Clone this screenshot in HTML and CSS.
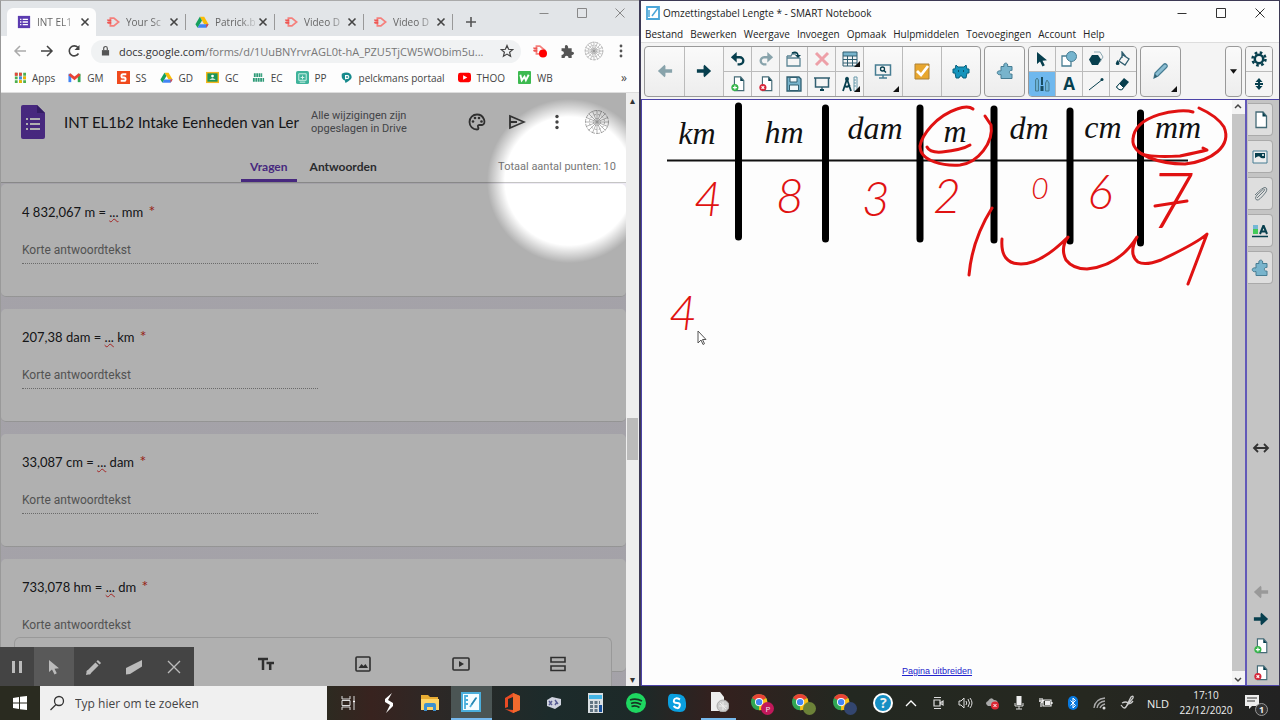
FILE: index.html
```html
<!DOCTYPE html>
<html lang="nl">
<head>
<meta charset="utf-8">
<title>Omzettingstabel Lengte</title>
<link rel="stylesheet" href="styles.css">
</head>
<body>
<svg class="defs" aria-hidden="true">
  <symbol id="x" viewBox="0 0 12 12"><path d="M2.5 2.5l7 7m0-7l-7 7" fill="none" stroke="currentColor" stroke-width="1.6"/></symbol>
  <symbol id="xthin" viewBox="0 0 12 12"><path d="M1.5 1.5l9 9m0-9l-9 9" fill="none" stroke="currentColor"/></symbol>
  <symbol id="min" viewBox="0 0 12 12"><path d="M1.500 6.500h9" stroke="currentColor"/></symbol>
  <symbol id="max" viewBox="0 0 12 12"><path d="M1.500 1.500h9v9h-9z" fill="none" stroke="currentColor"/></symbol>
  <symbol id="forms" viewBox="0 0 16 16"><path d="M1 1h14v14H1z" fill="#5b3bb0"/><path d="M3.500 5h1.500m1.500 0h6M3.500 8h1.500m1.500 0h6M3.500 11h1.500m1.500 0h6" stroke="#fff" stroke-width="1.500"/></symbol>
  <symbol id="rec" viewBox="0 0 16 14"><path d="M5 2.500h4l5.500 4.500L9 11.500H5z" fill="none" stroke="#f5807c" stroke-width="2"/><path d="M1 4h5v2.500H2zm1 5h4V7H1z" fill="#ee5753"/></symbol>
  <symbol id="drive" viewBox="0 0 16 14"><path d="M5.500 1h5l5 8.500h-5z" fill="#fbbc05"/><path d="M5.500 1L8 5.200 3 13.500.5 9.500z" fill="#16a05d"/><path d="M5.300 9.500h10.200L13 13.500H3z" fill="#4285f4"/><path d="M12.800 9.500h2.700L13 13.500z" fill="#ea4335"/></symbol>
  <symbol id="wheel" viewBox="0 0 26 26"><g fill="none" stroke="#959595" stroke-width=".8"><circle cx="13" cy="13" r="11.500" stroke-dasharray="4 1"/><circle cx="13" cy="13" r="7.500" stroke-dasharray="2 2"/><circle cx="13" cy="13" r="3.500" stroke-dasharray="2 1"/><path stroke-width=".7" d="M13 1v24M1 13h24M4.500 4.500l17 17m0-17l-17 17M8.400 2l9.200 22M17.600 2L8.400 24M2 8.400l22 9.200M2 17.600L24 8.400"/></g></symbol>
  <symbol id="arrow" viewBox="0 0 18 14"><path d="M9.500 0L17 7l-7.500 7-1-1.300V9H1V5h7.500V1.300z" fill="currentColor"/></symbol>
  <symbol id="puzzle" viewBox="0 0 18 18"><path d="M5 4.500h3C6.500 0 13 0 11.500 4.500H16v4c-3.500-1-3.500 4.500 0 3.500v4.500H5v-4C0 14 0 7.500 5 9z" fill="currentColor" stroke="#477d93" stroke-width="1"/></symbol>
  <symbol id="page" viewBox="0 0 16 18"><path d="M4 1h7l3.500 4v11.500H4z" fill="#fff" stroke="#456b77" stroke-width="1.300"/><path d="M10.500 1v4.500h4z" fill="#073f4e"/></symbol>
  <symbol id="addpage" viewBox="0 0 16 18"><use href="#page" width="16" height="18"/><circle cx="4.500" cy="13" r="4" fill="#36b54a"/><path d="M2.200 13h4.600M4.500 10.700v4.600" stroke="#fff" stroke-width="1.300"/></symbol>
  <symbol id="delpage" viewBox="0 0 16 18"><use href="#page" width="16" height="18"/><circle cx="4.500" cy="13" r="4" fill="#d6273a"/><path d="M3 11.500l3 3m0-3l-3 3" stroke="#fff" stroke-width="1.300"/></symbol>
  <symbol id="pointer" viewBox="0 0 14 16"><path d="M2 1v12l3-2.500 2.500 5 2.300-1.200-2.300-4.600 4.500-.5z" fill="currentColor"/></symbol>
  <symbol id="undo" viewBox="0 0 18 16"><path d="M6 6h5a4 4 0 010 8H8.500" fill="none" stroke="currentColor" stroke-width="2.600"/><path d="M7.500 0v12L1 6z" fill="currentColor"/></symbol>
  <symbol id="chrome" viewBox="0 0 22 20"><circle cx="10" cy="9" r="9" fill="#31a653"/><path d="M10 9L2.200 4.500A9 9 0 0117.800 4.500z" fill="#e94335"/><path d="M10 9l7.800-4.500A9 9 0 0110 18z" fill="#fbc116"/><circle cx="10" cy="9" r="4.500" fill="#fff"/><circle cx="10" cy="9" r="3.500" fill="#4285f4"/></symbol>
</svg>

<main class="desk">
  <section class="browser" aria-label="Browser">
    <div class="tabs">
      <div class="tab current"><svg class="i14"><use href="#forms"/></svg><span>INT EL1</span><button aria-label="Sluiten"><svg class="i12"><use href="#x"/></svg></button></div>
      <div class="tab plain"><svg class="i14"><use href="#rec"/></svg><span>Your Sc</span><button aria-label="Sluiten"><svg class="i12"><use href="#x"/></svg></button></div>
      <div class="tab"><svg class="i14"><use href="#drive"/></svg><span>Patrick.b</span><button aria-label="Sluiten"><svg class="i12"><use href="#x"/></svg></button></div>
      <div class="tab"><svg class="i14"><use href="#rec"/></svg><span>Video D</span><button aria-label="Sluiten"><svg class="i12"><use href="#x"/></svg></button></div>
      <div class="tab"><svg class="i14"><use href="#rec"/></svg><span>Video D</span><button aria-label="Sluiten"><svg class="i12"><use href="#x"/></svg></button></div>
      <button class="newtab" aria-label="Nieuw tabblad"><svg class="i12" viewBox="0 0 12 12"><path d="M6 1v10M1 6h10" stroke="#555" stroke-width="1.600"/></svg></button>
      <div class="winctl"><button aria-label="Minimaliseren"><svg class="i12"><use href="#min"/></svg></button><button aria-label="Maximaliseren"><svg class="i12"><use href="#max"/></svg></button><button aria-label="Sluiten"><svg class="i12"><use href="#xthin"/></svg></button></div>
    </div>
    <div class="nav">
      <button class="faint" aria-label="Terug"><svg class="i14" viewBox="0 0 14 14"><path d="M13 7H2m5-5L2 7l5 5" fill="none" stroke="currentColor" stroke-width="1.500"/></svg></button>
      <button aria-label="Vooruit"><svg class="i14" viewBox="0 0 14 14"><path d="M1 7h11M7 2l5 5-5 5" fill="none" stroke="currentColor" stroke-width="1.500"/></svg></button>
      <button aria-label="Vernieuwen"><svg class="i14" viewBox="0 0 14 14"><path d="M11.500 9.500a5 5 0 11-.5-6" fill="none" stroke="currentColor" stroke-width="1.600"/><path d="M12.500 1v5h-5z" fill="currentColor"/></svg></button>
      <div class="address"><svg class="lock" viewBox="0 0 10 12"><path d="M1 5h8v6H1z" fill="#555"/><path d="M3 5V3a2 2 0 014 0v2" fill="none" stroke="#555" stroke-width="1.300"/></svg><span><b>docs.google.com</b>/forms/d/1UuBNYrvrAGL0t-hA_PZU5TjCW5WObim5u...</span><svg class="i14" viewBox="0 0 14 14"><path d="M7 1.500l1.600 3.800 4.100.3-3.100 2.700 1 4L7 10.100l-3.600 2.200 1-4L1.300 5.600l4.100-.3z" fill="none" stroke="#444" stroke-width="1.200"/></svg></div>
      <button aria-label="Opname"><svg class="i16" viewBox="0 0 16 14"><use href="#rec" width="14" height="12"/><circle cx="11" cy="9.500" r="4" fill="#f00"/></svg></button>
      <button aria-label="Extensies"><svg class="i14" viewBox="0 0 18 18"><path d="M2 5.500h4.500C5 0 11 0 10.500 5.500H15V10c4-.5 4 4.500 0 4v4h-4c0-4-5-4-5 0H2v-4c4 0 4-5 0-5z" fill="#555"/></svg></button>
      <button aria-label="Profiel"><svg class="i20"><use href="#wheel"/></svg></button>
      <button aria-label="Menu"><svg class="i14" viewBox="0 0 14 14" fill="#555"><circle cx="7" cy="2" r="1.400"/><circle cx="7" cy="7" r="1.400"/><circle cx="7" cy="12" r="1.400"/></svg></button>
    </div>
    <nav class="bookmarks">
      <a href="#"><svg viewBox="0 0 14 14"><path d="M2 3.500h12M2 7.500h12M2 11.500h12" stroke-width="3" stroke-dasharray="3 1.500" stroke="#4caf50"/><path d="M2 3.500h8" stroke="#e8453c" stroke-width="3" stroke-dasharray="3 1.500"/><path d="M6.500 7.500h3" stroke="#4285f4" stroke-width="3"/><path d="M11 7.500h3M6.500 11.500h3" stroke="#f4b400" stroke-width="3"/></svg>Apps</a>
      <a href="#"><svg viewBox="0 0 14 14"><path d="M2 12V3" stroke="#4285f4" stroke-width="3"/><path d="M12 12V3" stroke="#34a853" stroke-width="3"/><path d="M1.500 3.500L7 8l5.500-4.500" fill="none" stroke="#ea4335" stroke-width="3"/></svg>GM</a>
      <a href="#"><svg viewBox="0 0 14 14"><path d="M0 0h14v14H0z" fill="#f04a1d"/><path d="M10 3.500H6.500a1.700 1.700 0 000 3.500h1a1.700 1.700 0 010 3.500H4" fill="none" stroke="#fff" stroke-width="2"/></svg>SS</a>
      <a href="#"><svg><use href="#drive"/></svg>GD</a>
      <a href="#"><svg viewBox="0 0 14 14"><path d="M0 1h14v12H0z" fill="#f4b81f"/><path d="M1.500 2.500h11v9h-11z" fill="#1c9656"/><circle cx="7" cy="5.500" r="1.500" fill="#fff"/><path d="M3.500 9.500q3.500-3.500 7 0z" fill="#fff"/></svg>GC</a>
      <a href="#"><svg viewBox="0 0 14 14"><path d="M2 4.500h9M1 9.500h12" stroke="#2f9b78" stroke-width="4" stroke-dasharray="2 .6"/></svg>EC</a>
      <a href="#"><svg viewBox="0 0 14 14"><rect width="14" height="14" rx="2" fill="#3fb39b"/><path d="M3 3h8v7H3zM5 7h4M7 5v4M4 12h6" fill="none" stroke="#d6f5ec"/></svg>PP</a>
      <a href="#"><svg viewBox="0 0 14 14"><path d="M2 3q5-3 9 0 4 5-2 8l-3 2-1-3Q1 9 2 3z" fill="#168a8c"/><path d="M6 9V5h2a1.500 1.500 0 010 3H6" fill="none" stroke="#fff" stroke-width="1.200"/></svg>pelckmans portaal</a>
      <a href="#"><svg viewBox="0 0 14 14"><rect y="2" width="14" height="10" rx="2.500" fill="#f00"/><path d="M5.500 4.500v5L10 7z" fill="#fff"/></svg>THOO</a>
      <a href="#"><svg viewBox="0 0 14 14"><rect width="14" height="14" rx="1" fill="#3dba50"/><path d="M2.500 4l1.500 6 3-4 1.500 4 3-6" fill="none" stroke="#fff" stroke-width="2"/></svg>WB</a>
      <button aria-label="Meer bladwijzers">»</button>
    </nav>
    <div class="viewport">
      <div class="form">
        <header class="formhead">
          <div class="titlebar">
            <svg class="formlogo" viewBox="0 0 24 34"><path d="M2 0h14l8 8v24a2 2 0 01-2 2H2a2 2 0 01-2-2V2a2 2 0 012-2z" fill="#673ab7"/><path d="M16 0v8h8z" fill="#4b2a91"/><path d="M5 14h2m2 0h10M5 19h2m2 0h10M5 24h2m2 0h10" stroke="#fff" stroke-width="2"/></svg>
            <h1>INT EL1b2 Intake Eenheden van Ler</h1>
            <p>Alle wijzigingen zijn opgeslagen in Drive</p>
            <button aria-label="Thema"><svg class="i18" viewBox="0 0 18 18"><path d="M9 1.500a7.500 7.500 0 100 15c2 0 1.500-1.700 1-2.500-.6-1.500.5-2 1.500-2H14c5-1 2-10.500-5-10.500z" fill="none" stroke="#444" stroke-width="1.800"/><g fill="#444"><circle cx="5" cy="8.500" r="1.300"/><circle cx="7" cy="5" r="1.300"/><circle cx="11" cy="5" r="1.300"/><circle cx="13.500" cy="8.500" r="1.300"/></g></svg></button>
            <button aria-label="Verzenden"><svg class="i18" viewBox="0 0 18 18"><path d="M2 3l14 6-14 6zM2 9h7" fill="none" stroke="#444" stroke-width="1.800"/></svg></button>
            <button aria-label="Meer"><svg class="i18" viewBox="0 0 18 18" fill="#444"><circle cx="9" cy="3.500" r="1.700"/><circle cx="9" cy="9" r="1.700"/><circle cx="9" cy="14.500" r="1.700"/></svg></button>
            <button aria-label="Account"><svg class="i26"><use href="#wheel"/></svg></button>
          </div>
          <div class="formtabs"><a class="on" href="#">Vragen</a><a href="#">Antwoorden</a><span>Totaal aantal punten: 10</span></div>
        </header>
        <article class="card"><label for="q1">4 832,067 m = <u>...</u> mm <i>*</i></label><input id="q1" placeholder="Korte antwoordtekst"></article>
        <article class="card"><label for="q2">207,38 dam = <u>...</u> km <i>*</i></label><input id="q2" placeholder="Korte antwoordtekst"></article>
        <article class="card"><label for="q3">33,087 cm = <u>...</u> dam <i>*</i></label><input id="q3" placeholder="Korte antwoordtekst"></article>
        <article class="card"><label for="q4">733,078 hm = <u>...</u> dm <i>*</i></label><input id="q4" placeholder="Korte antwoordtekst"></article>
        <div class="additem">
          <button aria-label="Titel toevoegen"><svg class="i18" viewBox="0 0 18 18"><path d="M1 4h10M6 4v11M9.500 8H17M13.200 8v7" fill="none" stroke="#444" stroke-width="2.500"/></svg></button>
          <button aria-label="Afbeelding toevoegen"><svg class="i18" viewBox="0 0 18 18"><rect x="2" y="2" width="14" height="14" rx="1" fill="none" stroke="#444" stroke-width="1.600"/><path d="M4.500 13l3-4 2 2 2-2 2.500 4z" fill="#444"/></svg></button>
          <button aria-label="Video toevoegen"><svg class="i18" viewBox="0 0 18 18"><rect x="1" y="3" width="16" height="12" rx="1" fill="none" stroke="#444" stroke-width="1.600"/><path d="M7 6v6l5-3z" fill="#444"/></svg></button>
          <button aria-label="Sectie toevoegen"><svg class="i18" viewBox="0 0 18 18"><path d="M2 2.500h14v4.500H2zM2 11h14v4.500H2z" fill="none" stroke="#444" stroke-width="1.600"/></svg></button>
        </div>
        <div class="spotlight"></div>
      </div>
      <div class="scroll"><span>▴</span><i></i><span>▾</span></div>
      <div class="recorder">
        <button aria-label="Pauze"><svg class="i16" viewBox="0 0 16 16"><path d="M4.500 2v12M11.500 2v12" stroke="currentColor" stroke-width="3"/></svg></button>
        <button class="on" aria-label="Aanwijzer"><svg class="i16"><use href="#pointer"/></svg></button>
        <button aria-label="Pen"><svg class="i18" viewBox="0 0 18 18"><path d="M3 15l9-9" stroke="currentColor" stroke-width="4.500"/><path d="M13 5l1.500-1.500" stroke="currentColor" stroke-width="4.500"/><path d="M1 17l1-5 4 4z" fill="currentColor"/></svg></button>
        <button aria-label="Gum"><svg class="i18" viewBox="0 0 18 18"><path d="M1 10L17 2v6.500L5 16l-4 .5z" fill="currentColor"/></svg></button>
        <button aria-label="Sluiten"><svg class="i16"><use href="#xthin"/></svg></button>
      </div>
    </div>
  </section>

  <section class="notebook" aria-label="SMART Notebook">
    <div class="caption"><svg class="i14" viewBox="0 0 14 14"><path d="M1 1h12v12H1z" fill="#fff" stroke="#4ba6d8" stroke-width="1.800"/><path d="M6 10l6-8M3 4v7" stroke="#4ba6d8" stroke-width="1.500"/></svg><span>Omzettingstabel Lengte * - SMART Notebook</span>
      <div class="winctl"><button aria-label="Minimaliseren"><svg class="i12"><use href="#min"/></svg></button><button aria-label="Maximaliseren"><svg class="i12"><use href="#max"/></svg></button><button aria-label="Sluiten"><svg class="i12"><use href="#xthin"/></svg></button></div></div>
    <nav class="menu"><a href="#">Bestand</a><a href="#">Bewerken</a><a href="#">Weergave</a><a href="#">Invoegen</a><a href="#">Opmaak</a><a href="#">Hulpmiddelen</a><a href="#">Toevoegingen</a><a href="#">Account</a><a href="#">Help</a></nav>
    <div class="tools">
      <div class="group">
        <button class="big pale" aria-label="Vorige"><svg class="i16 flip"><use href="#arrow"/></svg></button>
        <button class="big" aria-label="Volgende"><svg class="i16"><use href="#arrow"/></svg></button>
        <div class="pairs five">
          <button aria-label="Ongedaan maken"><svg class="i16"><use href="#undo"/></svg></button>
          <button class="pale" aria-label="Opnieuw"><svg class="i16 flip"><use href="#undo"/></svg></button>
          <button aria-label="Openen"><svg class="i16" viewBox="0 0 16 16"><path d="M1 5h4l1-2h4M14 7v8H1V5M1 7h13" fill="none" stroke="#5a8494" stroke-width="1.300"/><path d="M6 2q5-2 6 2" fill="none" stroke="#073f4e" stroke-width="1.600"/><path d="M9 4h6l-3 3z" fill="#073f4e"/></svg></button>
          <button aria-label="Verwijderen"><svg class="i16" viewBox="0 0 16 16"><path d="M2 2l12 12m0-12L2 14" stroke="#eda0a8" stroke-width="3"/></svg></button>
          <button class="more" aria-label="Tabel"><svg class="i16" viewBox="0 0 16 16"><path d="M1 1h14v4H1z" fill="#78b4cc"/><path d="M1 1h14v14H1zM1 5h14M1 8.500h14M1 12h14M5.500 5v10M10.500 5v10" fill="none" stroke="#315f70"/></svg></button>
          <button aria-label="Pagina toevoegen"><svg class="i16"><use href="#addpage"/></svg></button>
          <button aria-label="Pagina verwijderen"><svg class="i16"><use href="#delpage"/></svg></button>
          <button aria-label="Opslaan"><svg class="i16" viewBox="0 0 16 16"><path d="M1 1h12l2 2v12H1z" fill="#78b4cc" stroke="#315f70" stroke-width="1.300"/><path d="M4 1.500h7V6H4zM3.500 9h9v5.500h-9z" fill="#f3f8fa" stroke="#315f70"/></svg></button>
          <button aria-label="Scherm"><svg class="i16" viewBox="0 0 16 16"><path d="M0 2h16M1.500 2v9h13V2M8 11v3" fill="none" stroke="#315f70" stroke-width="1.500"/><path d="M6 13h4v2H6z" fill="#073f4e"/></svg></button>
          <button class="more" aria-label="Meetinstrumenten"><svg class="i16" viewBox="0 0 16 16"><path d="M1 15L5 3l4 12M3 10q2 2 5-1" fill="none" stroke="#073f4e" stroke-width="1.800"/><circle cx="5" cy="3" r="2" fill="#073f4e"/><path d="M12 1h3v14h-3zM12 4h2m-2 3h2m-2 3h2" fill="none" stroke="#6698aa"/></svg></button>
        </div>
        <button class="big more" aria-label="Schermweergave"><svg class="i18" viewBox="0 0 18 18"><path d="M1.500 3h15v10h-15zM9 13v2.500M5 16h8" fill="none" stroke="#477d93" stroke-width="1.500"/><circle cx="8.500" cy="7" r="2" fill="none" stroke="#073f4e" stroke-width="1.300"/><path d="M10 8.500l2 2" stroke="#073f4e" stroke-width="1.500"/></svg></button>
        <button class="big" aria-label="Beoordeling"><svg class="i18" viewBox="0 0 18 18"><path d="M2 2h14v15H2z" fill="#e8a72f" stroke="#ad8137"/><path d="M4 9l4 4 7-9" fill="none" stroke="#fff" stroke-width="2.800"/></svg></button>
        <button class="big" aria-label="Activiteiten"><svg class="i18" viewBox="0 0 18 18"><path d="M4 3l2 2h6l2-2 1 4h2v4h-2l-1 5h-3l-1-2H8l-1 2H4l-1-5H1V7h2z" fill="#1594bc" stroke="#07607d"/><path d="M6 9h1m4 0h1" stroke="#073f4e" stroke-width="1.500"/></svg></button>
      </div>
      <div class="group"><button class="big" aria-label="Invoegtoepassingen"><svg class="i18 blue"><use href="#puzzle"/></svg></button></div>
      <div class="group"><div class="pairs four">
        <button aria-label="Selecteren"><svg class="i16"><use href="#pointer"/></svg></button>
        <button aria-label="Vormen"><svg class="i16" viewBox="0 0 16 16"><path d="M1 5h9v10H1z" fill="#fff" stroke="#477d93" stroke-width="1.300"/><circle cx="10.500" cy="5.500" r="5" fill="#75b4ce" stroke="#477d93"/></svg></button>
        <button aria-label="Veelhoeken"><svg class="i16" viewBox="0 0 16 16"><path d="M6 1h6l3 5-3 5H6" fill="none" stroke="#8ba8b2"/><path d="M4 4h6l3 4.500-3 5.500H4L1 8.500z" fill="#073f4e"/></svg></button>
        <button aria-label="Vullen"><svg class="i16" viewBox="0 0 16 16"><path d="M8 4l6 4-4 6-6-4zM7 7V1l4 5" fill="none" stroke="#315f70" stroke-width="1.300"/><path d="M2.500 9q4 5 0 5-3.500 0 0-5z" fill="#073f4e"/></svg></button>
        <button class="picked" aria-label="Pennen"><svg class="i16" viewBox="0 0 16 16"><path d="M1.500 15V4L3 2l1.500 2v11zM11.500 15V7L13 4l2 3v8z" fill="#6bb1d5" stroke="#477d93"/><path d="M7 1h2v8H7zM6.500 10h3v5h-3z" fill="#174c60"/></svg></button>
        <button class="glyph" aria-label="Tekst">A</button>
        <button aria-label="Lijn"><svg class="i16" viewBox="0 0 16 16"><path d="M1 14L15 3" stroke="#073f4e"/><circle cx="14" cy="3.500" r="1.500" fill="#073f4e"/></svg></button>
        <button aria-label="Gum"><svg class="i16" viewBox="0 0 16 16"><path d="M9 2l5 4-7 8H4l-3-3z" fill="#073f4e"/><path d="M4.500 7.500l4 4-2 2.500-2.500-.5L1.500 11z" fill="#fff" stroke="#073f4e"/></svg></button>
      </div></div>
      <div class="group"><button class="big more" aria-label="Potlood"><svg class="i16" viewBox="0 0 16 16"><path d="M1 15l1-5 8.500-8.500q1.500-1.500 3 0t0 3L5 13z" fill="#8bbdd2" stroke="#477d93" stroke-width="1.200"/><path d="M1 15l1-4 2.500 2.500z" fill="#315f70"/></svg></button></div>
      <div class="group slim"><button aria-label="Meer opties"><svg viewBox="0 0 8 6"><path d="M0 1h8L4 6z" fill="#111"/></svg></button></div>
      <div class="group"><div class="pairs one">
        <button aria-label="Instellingen"><svg class="i16" viewBox="0 0 16 16"><circle cx="8" cy="8" r="6.500" fill="none" stroke="#073f4e" stroke-width="2.500" stroke-dasharray="2.600 2.500"/><circle cx="8" cy="8" r="4.200" fill="none" stroke="#073f4e" stroke-width="2.500"/></svg></button>
        <button aria-label="Verplaatsen"><svg class="i14" viewBox="0 0 14 14"><path d="M7 2v10M3 7h8" stroke="#073f4e" stroke-width="2"/><path d="M3.500 5L7 1l3.500 4zM3.500 9L7 13l3.500-4z" fill="#073f4e"/></svg></button>
      </div></div>
    </div>
    <div class="work">
      <div class="canvas">
        <svg class="ink"><g transform="translate(-642 -100)">
          <g class="heads"><text x="697" y="144">km</text><text x="784" y="143">hm</text><text x="875" y="139">dam</text><text x="955" y="142">m</text><text x="1029" y="139">dm</text><text x="1103" y="138">cm</text><text x="1178" y="138">mm</text></g>
          <g class="digits"><text x="708" y="216">4</text><text x="790" y="213">8</text><text x="876" y="216">3</text><text x="947" y="213">2</text><text class="little" x="1040" y="199">0</text><text x="1100" y="209">6</text><text class="tall" x="1172" y="228">7</text><text x="683" y="330">4</text></g>
          <path d="M667 160.500H1188" stroke="#111" stroke-width="2"/>
          <path class="bar" d="M738.500 106V237M825.500 108V239M920 108V239M994 109V240M1070 111V241M1140.500 113V243"/>
          <g class="pen">
            <path d="M973 109Q968 105 957 109C936 116 922 135 920 146 920 162 945 166 960 165 978 163 994 142 991 125L985 116"/>
            <path d="M927 147Q930 153 942 152 962 150 970 145"/>
            <path d="M1193 112C1180 108 1135 114 1133 139 1131 155 1160 164 1185 164 1212 161 1232 146 1224 127Q1217 116 1199 108"/>
            <path d="M1139 152Q1145 158 1180 156 1199 152 1207 150L1203 148"/>
            <path d="M992 208Q972 240 969 275"/>
            <path d="M1002 239Q1000 264 1021 264 1041 264 1068 237 1060 248 1066 260 1073 269 1087 269 1119 266 1137 237 1128 254 1138 262 1145 266 1161 260 1197 243 1207 234L1188 284"/>
            <path d="M1155 206L1187 201"/>
          </g>
        </g></svg>
        <svg class="cursor" viewBox="0 0 14 16"><path d="M3 1v12l3-3 2 4.500 1.500-.8L7.500 9.500H11z" fill="#fff" stroke="#555"/></svg>
        <a class="extend" href="#">Pagina uitbreiden</a>
      </div>
      <div class="vscroll"><svg class="i12" viewBox="0 0 12 12"><path d="M3 8l3-3 3 3" fill="none" stroke="#444" stroke-width="1.500"/></svg><i></i><svg class="i12" viewBox="0 0 12 12"><path d="M3 5l3 3 3-3" fill="none" stroke="#444" stroke-width="1.500"/></svg></div>
      <aside class="side">
        <button class="sidetab" aria-label="Pagina's"><svg class="i18"><use href="#page"/></svg></button>
        <button class="sidetab" aria-label="Galerij"><svg class="i16" viewBox="0 0 16 16"><path d="M1 2h14v12H1z" fill="#eee" stroke="#477d93"/><path d="M3 4h10v5q-4 1-5-1t-5 1z" fill="#073f4e"/><circle cx="11" cy="6" r="1" fill="#fff"/></svg></button>
        <button class="sidetab" aria-label="Bijlagen"><svg class="i16" viewBox="0 0 16 16"><path d="M5 12l7-7q1.500-2-.5-2L5 9q-3 4 0 5 2 1 9-8 2-4-1-4.500Q11 1 3 9" fill="none" stroke="#6b7a80"/></svg></button>
        <button class="sidetab" aria-label="Eigenschappen"><svg class="i16" viewBox="0 0 16 16"><path d="M1 2h5v4H1z" fill="#74b7d5"/><path d="M1 6h5v5H1z" fill="#42ca59"/><path d="M0 13.500h16" stroke="#073f4e" stroke-width="1.500"/><path d="M11.500 2.500L8 11m3.500-8.500L15 11M9 8.500h5" fill="none" stroke="#073f4e" stroke-width="2"/></svg></button>
        <button class="sidetab" aria-label="Invoegtoepassingen"><svg class="i18 blue"><use href="#puzzle"/></svg></button>
        <button class="resize" aria-label="Zijbalk verbreden"><svg class="i18" viewBox="0 0 18 18"><path d="M3 9h12M6 5L2 9l4 4m6-8l4 4-4 4" fill="none" stroke="#333" stroke-width="1.800"/></svg></button>
        <button class="grey" aria-label="Vorige pagina"><svg class="i16 flip"><use href="#arrow"/></svg></button>
        <button aria-label="Volgende pagina"><svg class="i16"><use href="#arrow"/></svg></button>
        <button aria-label="Pagina toevoegen"><svg class="i16"><use href="#addpage"/></svg></button>
        <button aria-label="Pagina verwijderen"><svg class="i16"><use href="#delpage"/></svg></button>
      </aside>
    </div>
  </section>
</main>

<footer class="taskbar">
  <button class="start" aria-label="Start"><svg class="i16" viewBox="0 0 16 16" fill="#fff"><path d="M1 3l6-1v5.500H1zM8 1.800L15 1v6.500H8zM1 8.500h6V14l-6-1zM8 8.500h7V15l-7-.8z"/></svg></button>
  <label class="find"><svg class="i16" viewBox="0 0 16 16"><circle cx="10" cy="6" r="4.500" fill="none" stroke="#333" stroke-width="1.300"/><path d="M7 9.500L1.500 15" stroke="#333" stroke-width="1.300"/></svg><input aria-label="Zoeken" placeholder="Typ hier om te zoeken"></label>
  <div class="apps">
    <button aria-label="Taakweergave"><svg class="i16" viewBox="0 0 16 16"><path d="M2 1v3h8V1M2 15v-3h8v3M2 5.500h8v5H2zM14 1v4m0 3v7" fill="none" stroke="#ddd"/><path d="M13 5.500h2v2h-2z" fill="#fff"/></svg></button>
    <button aria-label="Smartschool"><svg class="i20" viewBox="0 0 20 20"><path d="M13 0L6 6v3l5 3-4 8 7-7v-3L9 7z" fill="#fff"/></svg></button>
    <button aria-label="Verkenner"><svg class="i20" viewBox="0 0 20 20"><path d="M1 2h7l2 2h8v13H1z" fill="#e9ac32"/><path d="M1 6h18v11H1z" fill="#ffd567"/><path d="M4 18v-6q0-2 2-2h8q2 0 2 2v6h-3v-4H7v4z" fill="#3d91cf"/></svg></button>
    <button class="active" aria-label="SMART Notebook"><svg class="i20" viewBox="0 0 20 20"><path d="M1 1h18v18H1z" fill="#f4fcff" stroke="#4baedb" stroke-width="2"/><path d="M4 3v14M4 4h3M4 8h3M4 12h3M9 15l6-9" stroke="#4baedb" stroke-width="1.800"/><path d="M10 12l5-7 1 1-5 7z" fill="#2582ac"/></svg></button>
    <button aria-label="Office"><svg class="i20" viewBox="0 0 20 20"><path d="M11 0l7 3v14l-7 3-8-4 8 1V4L6 6v8l-3 1V5z" fill="#eb4b24"/><path d="M11 0l7 3v14l-7 3z" fill="#f06a2d"/></svg></button>
    <button aria-label="Rekenblokken"><svg class="i16" viewBox="0 0 16 16"><path d="M1 5l5-3 9 2v6l-6 4-8-3z" fill="#cfd3df"/><path d="M3 6l3 4m-3 0l3-4M9 5l3 4m-3 1l2-3" stroke="#565b92" stroke-width="1.400"/></svg></button>
    <button aria-label="Rekenmachine"><svg class="i20" viewBox="0 0 20 20"><path d="M3 0h15v20H3z" fill="#d9dfe3"/><path d="M4 2h13v4H4z" fill="#43b4e5"/><path d="M5 9.500h10M5 13.500h8M5 17.500h8" stroke="#607482" stroke-width="3" stroke-dasharray="3 1.500"/><path d="M14 12h3v7h-3z" fill="#164f9b"/></svg></button>
    <button aria-label="Spotify"><svg class="i20" viewBox="0 0 20 20"><circle cx="10" cy="10" r="10" fill="#1ed760"/><path d="M4 7q6-2 12 1M5 10.500q5-2 10 1M5.500 13.500q4-1.500 8 1" fill="none" stroke="#173524" stroke-width="1.700"/></svg></button>
    <button aria-label="Skype"><svg class="i20" viewBox="0 0 20 20"><path d="M1 6Q1 0 7 1q12-1 12 9 1 9-6 9Q1 19 1 10z" fill="#0a9fdf"/><path d="M13 6.500Q8 4 7 7t3 3 2.500 3.500T6.500 13" fill="none" stroke="#fff" stroke-width="2"/></svg></button>
    <button class="open" aria-label="Document"><svg class="i20" viewBox="0 0 20 20"><path d="M2 0h9l4 5v14H2z" fill="#eee"/><circle cx="14" cy="14" r="6" fill="#ccc" stroke="#aaa"/><path d="M10 14h8m-4-4v8m-3-7l6 6" stroke="#eee"/></svg></button>
    <button class="badged" aria-label="Chrome P"><svg class="i20"><use href="#chrome"/></svg><b>P</b></button>
    <button class="badged" aria-label="Chrome"><svg class="i20"><use href="#chrome"/></svg><b class="olive"></b></button>
    <button class="badged" aria-label="Chrome"><svg class="i20"><use href="#chrome"/></svg><b class="navy"></b></button>
    <button aria-label="Help"><span class="help">?</span></button>
  </div>
  <div class="tray">
    <button class="up" aria-label="Meer pictogrammen"><svg class="i12" viewBox="0 0 12 12"><path d="M1 9l5-5 5 5" fill="none" stroke="#fff" stroke-width="1.300"/></svg></button>
    <button aria-label="Vergadering"><svg class="i14" viewBox="0 0 14 14"><path d="M3 4h6v6H3zM9 7l3-2v4zM3 1.500h7m-7 11h7" fill="none" stroke="#ddd" stroke-width="1.200"/></svg></button>
    <button aria-label="Geluid"><svg class="i16" viewBox="0 0 16 16"><path d="M2 6h2l3-3v10l-3-3H2zM9 6q1.500 2 0 4m2-6q3 4 0 8m2-9q4 5 0 10" fill="none" stroke="#ddd"/></svg></button>
    <button aria-label="OneDrive"><svg class="i14" viewBox="0 0 14 14"><path d="M3 10q-4-3 0-5 3-5 6-1 4 0 4 4l-2 2z" fill="#aaa"/><circle cx="10" cy="9.500" r="4" fill="#dc2935"/><path d="M8.500 8l3 3m0-3l-3 3" stroke="#fff"/></svg></button>
    <button aria-label="Microfoon"><svg class="i14" viewBox="0 0 14 14"><path d="M4.500 0h5v9h-5z" fill="#eee"/><path d="M3 7v3h8V7M7 10v3m-3 0h6" fill="none" stroke="#ddd"/></svg></button>
    <button aria-label="Batterij"><svg class="i14" viewBox="0 0 14 14"><path d="M4 4h8v6H4zM13 6v2M1 2v4m2-4v4M0 5h4L2 7v4" fill="none" stroke="#eee" stroke-width="1.200"/><path d="M6 5h5v4H6z" fill="#eee"/></svg></button>
    <button aria-label="Bluetooth"><svg class="i14" viewBox="0 0 14 14"><rect x="2" width="10" height="14" rx="5" fill="#0879df"/><path d="M4.500 4.500l5 5L7 12V2l2.500 2.500-5 5" fill="none" stroke="#fff"/></svg></button>
    <button aria-label="Wifi"><svg class="i14" viewBox="0 0 14 14"><path d="M1 12Q2 3 12 2M4 12q1-6 8-7M7 12q1-3 5-4" fill="none" stroke="#aaa" stroke-width="1.300"/><circle cx="11" cy="12" r="1.500" fill="#ddd"/></svg></button>
    <button aria-label="Pen"><svg class="i16" viewBox="0 0 16 16"><path d="M2 10q4 6 6 0l4-8q3-2 2 1L6 13m-3-5q4-2 6 0t5-2" fill="none" stroke="#ccc" stroke-width="1.300"/></svg></button>
    <span class="lang">NLD</span>
    <time>17:10<br>22/12/2020</time>
    <button class="notice" aria-label="Meldingen"><svg class="i20" viewBox="0 0 20 20"><path d="M1 2h14v11H8l-3 3v-3H1z" fill="#eee"/><path d="M3 5h10M3 8h8" stroke="#333"/></svg><b>1</b></button>
  </div>
</footer>
</body>
</html>
```
FILE: styles.css
```css
* { box-sizing: border-box; }
body { margin: 0; height: 100vh; display: flex; flex-direction: column; overflow: hidden; font: 11px "Open Sans", "Noto Sans", sans-serif; color: #333; }
button { border: 0; padding: 0; background: none; color: inherit; font: inherit; display: flex; align-items: center; justify-content: center; }
a { color: inherit; text-decoration: none; }
svg { flex: none; display: block; }
.defs { position: absolute; width: 0; height: 0; }
.i12 { width: 12px; height: 12px; }
.i14 { width: 14px; height: 14px; }
.i16 { width: 16px; height: 16px; }
.i18 { width: 18px; height: 18px; }
.i20 { width: 20px; height: 20px; }
.i26 { width: 26px; height: 26px; }
.flip { transform: scaleX(-1); }
.blue { color: #78b4cc; }

.desk { flex: 1; min-height: 0; display: grid; grid-template-columns: 1fr 1fr; background: #3d3a55; }
.browser { display: flex; flex-direction: column; min-width: 0; min-height: 0; margin-right: 1px; background: #fdfdfd; border-left: 1px solid #999; border-top: 1px solid #aaa; }
.tabs { height: 35px; display: flex; align-items: flex-end; padding-left: 6px; background: #e2e5e8; }
.tab { width: 89px; height: 28px; display: flex; align-items: center; padding: 0 5px 0 10px; position: relative; }
.tab span { flex: 1; margin-left: 6px; white-space: nowrap; font-size: 10px; color: #666; mask-image: linear-gradient(90deg, #000 60%, rgba(0, 0, 0, .1)); }
.tab button { color: #444; }
.tab::before { content: ""; width: 1px; height: 16px; background: #999; position: absolute; left: 0; }
.tab.current::before, .tab.plain::before { display: none; }
.current { background: #fdfdfd; border-radius: 6px 6px 0 0; }
.newtab { width: 36px; height: 16px; margin-bottom: 6px; border-left: 1px solid #999; }
.winctl { margin-left: auto; align-self: flex-start; display: flex; height: 24px; }
.winctl button { width: 38px; color: #888; }
.nav { height: 30px; display: flex; align-items: center; padding: 0 5px; color: #444; }
.nav > button { width: 27px; }
.faint { color: #aaa; }
.address { flex: 1; min-width: 0; height: 23px; margin: 0 5px 0 4px; padding: 0 7px 0 10px; display: flex; align-items: center; gap: 9px; border-radius: 12px; background: #f0f2f3; font-size: 11px; color: #777; }
.address span { flex: 1; white-space: nowrap; }
.address b { font-weight: 400; color: #333; }
.lock { width: 9px; height: 12px; }
.bookmarks { height: 27px; display: flex; align-items: center; gap: 13px; padding: 0 12px 3px; border-bottom: 1px solid #ddd; font-size: 10px; color: #444; white-space: nowrap; }
.bookmarks a { display: flex; align-items: center; gap: 6px; }
.bookmarks svg { width: 13px; height: 13px; }
.bookmarks button { margin-left: auto; font-size: 12px; }

.viewport { flex: 1; min-height: 0; display: flex; position: relative; }
.form { flex: 1; min-width: 0; position: relative; overflow: hidden; background: #eeebf4; font-family: Lato, sans-serif; display: flex; flex-direction: column; gap: 12px; }
.formhead { flex: none; height: 90px; margin-bottom: -11px; background: #fff; border-bottom: 1px solid #c5c5c5; display: flex; flex-direction: column; }
.titlebar { height: 58px; display: flex; align-items: center; padding: 0 9px 0 20px; }
.formlogo { width: 24px; height: 34px; }
h1 { flex: 1; margin: 0 0 0 19px; font-size: 15px; font-weight: 400; color: #202124; white-space: nowrap; }
.titlebar p { width: 114px; margin: 0 32px 0 0; font: 11px/13px Roboto, sans-serif; color: #5f6368; }
.titlebar button { width: 40px; }
.formtabs { height: 31px; display: flex; align-items: stretch; gap: 4px; padding: 0 10px 0 240px; font-size: 12px; font-weight: 700; color: #3c4043; }
.formtabs a { padding: 8px 9px 0; }
.formtabs .on { color: #673ab7; border-bottom: 3px solid #673ab7; }
.formtabs span { margin-left: auto; padding-top: 9px; font: 11px Roboto, sans-serif; color: #777; white-space: nowrap; }
.card { flex: none; height: 113px; padding: 18px 21px; background: #fff; border-radius: 5px; border-bottom: 1px solid #d7d7d7; display: flex; flex-direction: column; align-items: flex-start; gap: 17px; }
.card label { font-size: 13px; line-height: 20px; color: #202124; }
.card u { text-decoration: underline wavy #e33 1px; text-underline-offset: 1px; }
.card label i { color: #d93025; margin-left: 2px; font-style: normal; font-size: 16px; line-height: 16px; }
.card input { width: 296px; height: 25px; padding: 0 0 3px; border: 0; border-bottom: 1px dotted #999; background: none; font: 12px Roboto, sans-serif; }
.card input::placeholder { color: #777; opacity: 1; }
.additem { position: absolute; left: 13px; right: 14px; bottom: 0; height: 49px; padding: 4px 4px 0 202px; display: grid; grid-template-columns: repeat(4, 1fr); background: #fff; border: 1px solid #ddd; border-bottom: 0; border-radius: 6px 6px 0 0; }
.spotlight { position: absolute; inset: 0; pointer-events: none; background: radial-gradient(circle at 568px 88px, transparent 64px, rgba(0, 0, 0, .31) 82px); }
.scroll { width: 13px; background: #eee; display: flex; flex-direction: column; align-items: center; justify-content: space-between; font-size: 10px; }
.scroll i { width: 11px; height: 42px; margin-top: 98px; background: #bbb; }
.recorder { position: absolute; left: -1px; bottom: 0; height: 39px; display: flex; background: #444; color: #bbb; }
.recorder button { width: 40px; }
.recorder button:first-child { width: 34px; }
.recorder .on { background: #595959; }

.notebook { display: flex; flex-direction: column; min-width: 0; min-height: 0; margin: 1px 1px 0; background: #fdfdfd; }
.caption { height: 24px; display: flex; align-items: center; gap: 3px; padding-left: 5px; font-size: 10px; color: #222; }
.caption .winctl button { width: 39px; color: #333; }
.menu { height: 17px; display: flex; align-items: center; gap: 7px; padding-left: 4px; font-size: 10px; color: #222; white-space: nowrap; }
.tools { height: 57px; display: flex; align-items: center; gap: 3px; padding: 0 6px 0 3px; background: #f4f4f4; border-top: 1px solid #ddd; color: #073f4e; }
.group { height: 51px; display: flex; border: 1px solid #999; border-radius: 4px; background: linear-gradient(#fafafa, #ededed); overflow: hidden; }
.group > * + * { border-left: 1px solid #bbb; }
.big { width: 39px; }
.group .big + .big, .pairs + .big { width: 39px; }
.pale { color: #88a3ab; }
.pairs { display: grid; grid-template-rows: 1fr 1fr; gap: 1px; background: #bbb; }
.pairs button { background: #f5f5f5; }
.five { grid-template-columns: repeat(5, 27px); }
.four { grid-template-columns: repeat(4, 26px); }
.one { grid-template-columns: 26px; }
.more { position: relative; }
.more::after { content: ""; position: absolute; right: 3px; bottom: 4px; border: 3px solid #111; border-top-color: transparent; border-left-color: transparent; }
.pairs .picked { background: #6fb8ee; }
.glyph { font: 700 17px "Open Sans", sans-serif; }
.slim { width: 17px; margin-left: auto; justify-content: center; }
.slim svg { width: 7px; height: 6px; }
.work { flex: 1; min-height: 0; display: flex; border: 1px solid #4c43a7; border-right: 0; }
.canvas { flex: 1; min-width: 0; position: relative; background: #fdfdfd; }
.ink { position: absolute; inset: 0; width: 100%; height: 100%; }
.ink text { text-anchor: middle; font-style: italic; }
.heads { font: italic 32px "Liberation Serif", serif; fill: #111; }
.digits { font: italic 300 48px Lato, sans-serif; fill: #e01212; }
.digits .little { font-size: 30px; }
.digits .tall { font-size: 76px; }
.bar { stroke: #000; stroke-width: 7; stroke-linecap: round; }
.pen { fill: none; stroke: #e01212; stroke-width: 3; stroke-linecap: round; stroke-linejoin: round; }
.cursor { position: absolute; left: 53px; top: 230px; width: 14px; height: 16px; }
.extend { position: absolute; left: 0; right: 0; bottom: 9px; text-align: center; font: 9px "Liberation Sans", sans-serif; color: #22c; text-decoration: underline; }
.vscroll { width: 13px; display: flex; flex-direction: column; gap: 2px; background: #f4f4f4; }
.vscroll i { flex: 1; background: #c6c6c6; }
.side { width: 34px; display: flex; flex-direction: column; gap: 4px; padding: 3px 6px 1px 1px; border-left: 2px solid #6259b8; background: #c4c4c4; color: #073f4e; }
.side button { height: 23px; flex: none; }
.side .sidetab { height: 33px; background: #dedede; border: 1px solid #aaa; border-left: 0; border-radius: 0 4px 4px 0; }
.side .resize { margin: auto 0 117px; }
.side .grey { color: #999; }

.taskbar { height: 34px; display: flex; background: linear-gradient(90deg, #2b2b21 0 25%, #38231f 29%, #2d2826 34%, #1c2b2b 43%, #1d2928 50%, #34201e 56%, #232821 66%, #262820 85%, #222); color: #eee; }
.start { width: 40px; background: #2a2b20; }
.find { width: 287px; display: flex; align-items: center; gap: 8px; padding-left: 9px; background: #f0f0f0; }
.find input { flex: 1; min-width: 0; border: 0; background: none; font: 12px "Open Sans", sans-serif; }
.find input::placeholder { color: #444; opacity: 1; }
.apps { flex: 1; min-width: 0; display: grid; grid-template-columns: repeat(14, 1fr); }
.active { background: #4b5554; border-bottom: 2px solid #76b9ed; }
.open { border-bottom: 2px solid #76b9ed; margin: 0 3px; }
.badged { position: relative; }
.badged b { position: absolute; right: 6px; bottom: 5px; width: 13px; height: 13px; border-radius: 50%; background: #c2185b; font-size: 8px; line-height: 13px; font-weight: 400; }
.badged .olive { background: #6c8238; }
.badged .navy { background: #33466f; }
.help { width: 20px; height: 20px; border-radius: 50%; border: 2px solid #fff; background: #158fc4; font-weight: 700; font-size: 14px; line-height: 16px; }
.tray { display: flex; align-items: center; padding-right: 12px; }
.tray > button { width: 27px; height: 34px; }
.tray .up { width: 14px; margin-right: 6px; }
.lang { width: 36px; text-align: center; }
time { width: 60px; text-align: center; font-size: 10px; line-height: 15px; white-space: nowrap; }
.tray .notice { width: 28px; margin-left: 4px; position: relative; }
.notice b { position: absolute; right: 0; bottom: 4px; width: 13px; height: 13px; border-radius: 50%; border: 1px solid #999; background: #333; font-size: 9px; line-height: 11px; }
```
